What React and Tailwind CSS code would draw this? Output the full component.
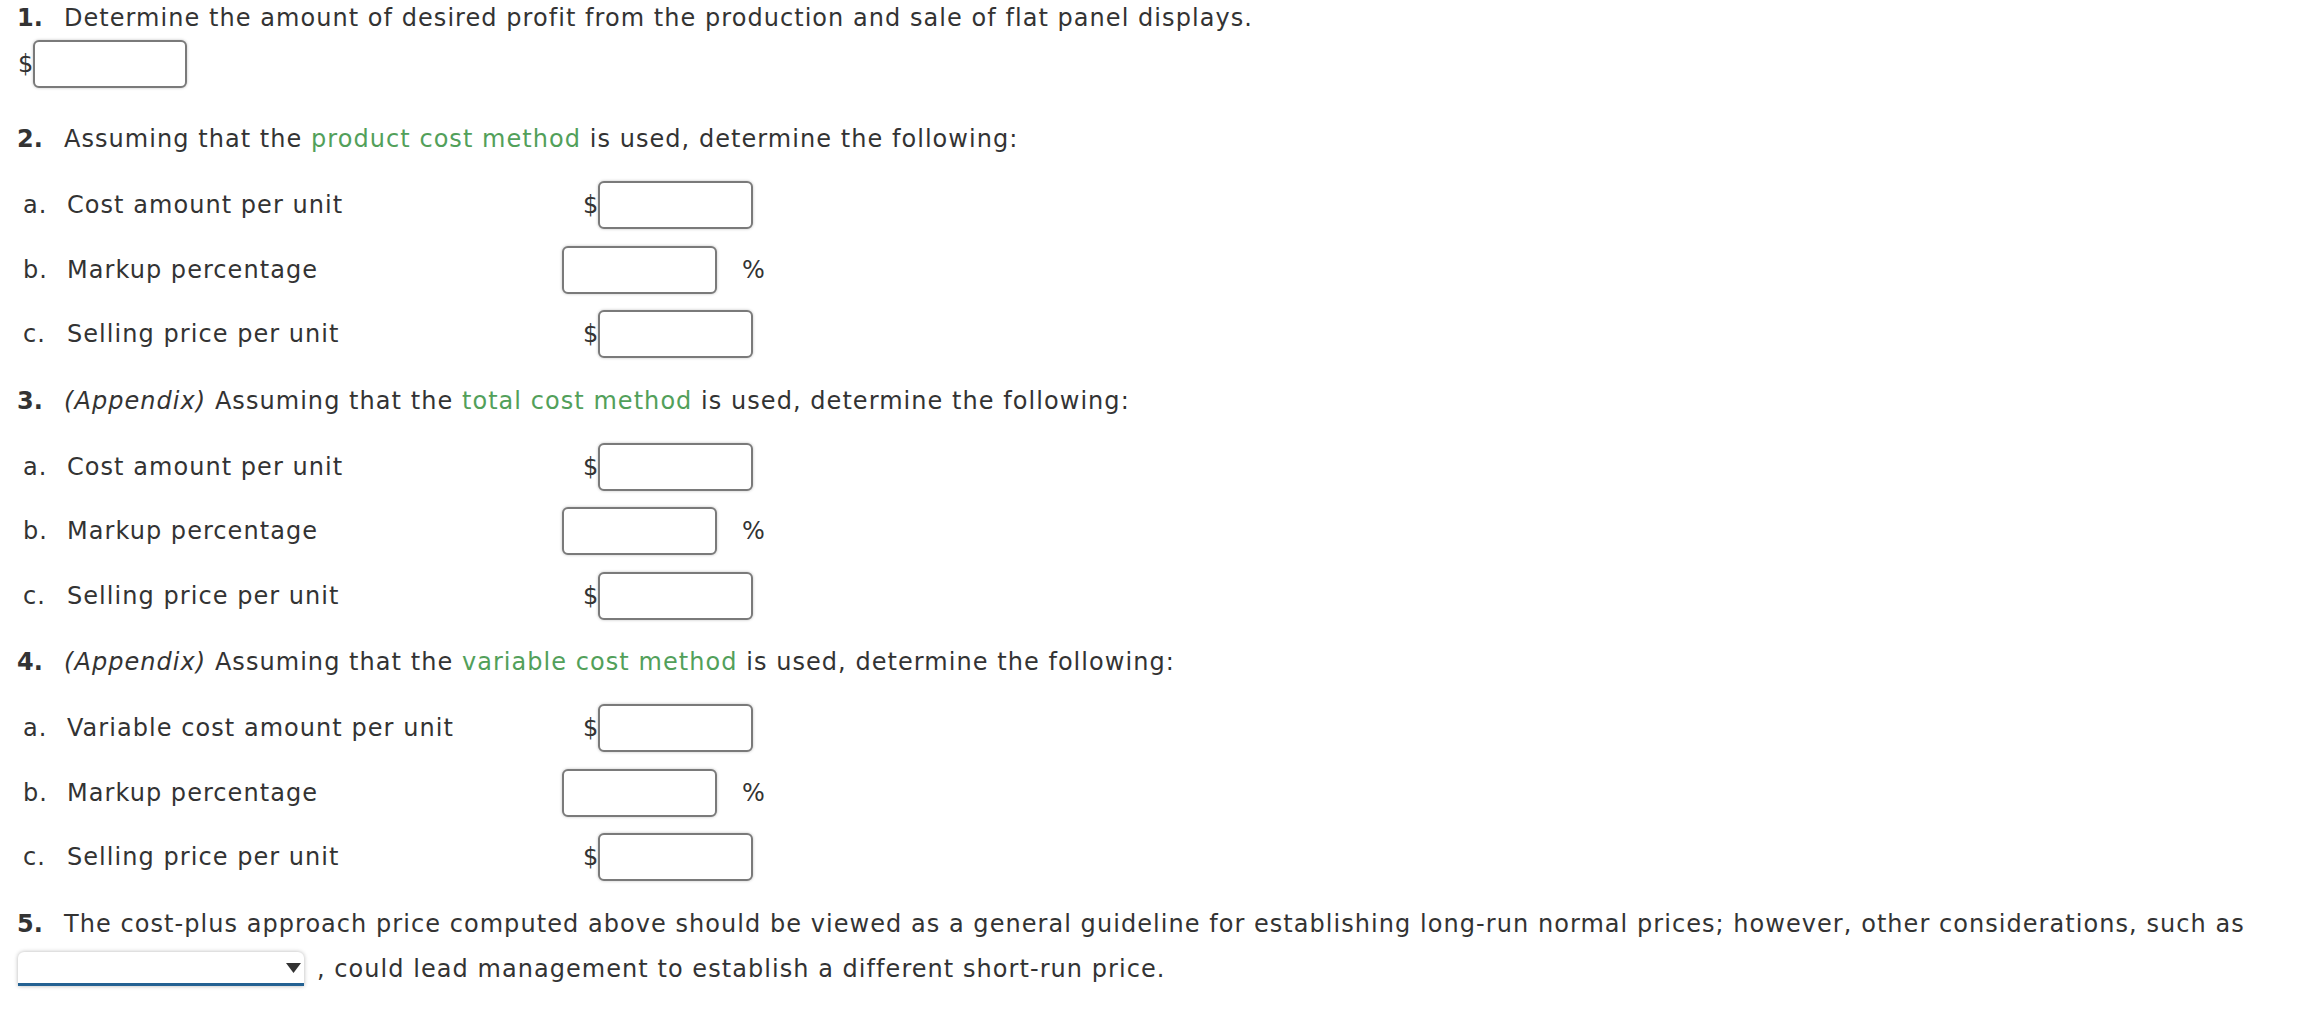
import React from 'react';

const green = 'text-[#52a05a]';

function Box({ width = 'w-[155px]' }) {
  return (
    <input
      type="text"
      className={`${width} h-[48px] bg-white border-2 border-[#7a7a7a] rounded-[6px] shadow-[0_0_3px_rgba(0,0,0,0.25)] outline-none`}
    />
  );
}

function Heading({ num, children }) {
  return (
    <div className="flex items-center h-[36px] pl-[17px] whitespace-nowrap">
      <span className="w-[47px] font-bold text-[#333] tracking-normal">{num}</span>
      <span>{children}</span>
    </div>
  );
}

function Row({ letter, label, kind }) {
  return (
    <div className="flex items-center h-[64.5px] pl-[23px]">
      <div className="flex w-[539px]">
        <span className="w-[44px]">{letter}</span>
        <span>{label}</span>
      </div>
      {kind === 'dollar' ? (
        <div className="flex items-center">
          <span className="ml-[21px] tracking-normal">$</span>
          <Box />
        </div>
      ) : (
        <div className="flex items-center">
          <Box />
          <span className="ml-[25px]">%</span>
        </div>
      )}
    </div>
  );
}

function Section({ rows }) {
  return (
    <div className="my-[16px]">
      {rows.map((r) => (
        <Row key={r.letter} {...r} />
      ))}
    </div>
  );
}

const standardRows = [
  { letter: 'a.', label: 'Cost amount per unit', kind: 'dollar' },
  { letter: 'b.', label: 'Markup percentage', kind: 'percent' },
  { letter: 'c.', label: 'Selling price per unit', kind: 'dollar' },
];

const variableRows = [
  { letter: 'a.', label: 'Variable cost amount per unit', kind: 'dollar' },
  { letter: 'b.', label: 'Markup percentage', kind: 'percent' },
  { letter: 'c.', label: 'Selling price per unit', kind: 'dollar' },
];

export default function App() {
  return (
    <div className="w-[2300px] min-h-[1014px] bg-white text-[#333] text-[24px] leading-[36px] tracking-[1.05px] font-['DejaVu_Sans',Verdana,sans-serif]">
      <Heading num="1.">
        Determine the amount of desired profit from the production and sale of flat panel displays.
      </Heading>
      <div className="flex items-center mt-[4px] mb-[33px] pl-[18px]">
        <span className="tracking-normal">$</span>
        <Box width="w-[154px]" />
      </div>

      <Heading num="2.">
        Assuming that the <span className={green}>product cost method</span> is used, determine the following:
      </Heading>
      <Section rows={standardRows} />

      <Heading num="3.">
        <i>(Appendix)</i> Assuming that the <span className={green}>total cost method</span> is used, determine the following:
      </Heading>
      <Section rows={standardRows} />

      <Heading num="4.">
        <i>(Appendix)</i> Assuming that the <span className={green}>variable cost method</span> is used, determine the following:
      </Heading>
      <Section rows={variableRows} />

      <Heading num="5.">
        The cost-plus approach price computed above should be viewed as a general guideline for establishing long-run normal prices; however, other considerations, such as
      </Heading>
      <div className="flex items-center mt-[9px] pl-[18px]">
        <div className="relative w-[286px] h-[34px] bg-white rounded-t-[6px] border-b-[3px] border-[#236192] shadow-[0_0_4px_rgba(0,0,0,0.3)]">
          <svg className="absolute right-[3px] top-[11px]" width="15" height="10" viewBox="0 0 15 10">
            <polygon points="0,0 15,0 7.5,10" fill="#333" />
          </svg>
        </div>
        <span className="ml-[13px]">, could lead management to establish a different short-run price.</span>
      </div>
    </div>
  );
}
